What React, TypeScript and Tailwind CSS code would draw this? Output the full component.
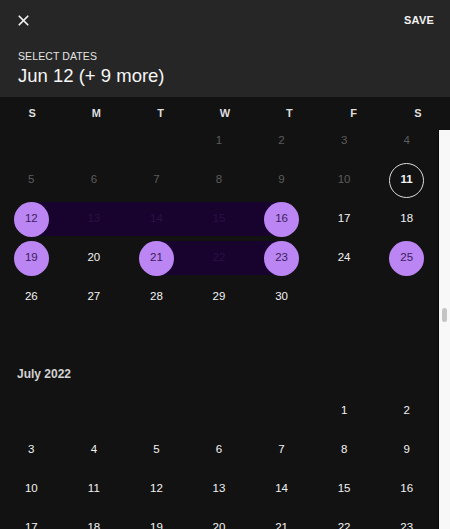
import { X } from "lucide-react";

type Month = {
  label: string;
  offset: number;
  days: number;
  pastUntil: number;
  today?: number;
  selected: number[];
};

const WEEKDAYS = ["S", "M", "T", "W", "T", "F", "S"];

const MONTHS: Month[] = [
  { label: "June 2022", offset: 3, days: 30, pastUntil: 10, today: 11, selected: [12, 13, 14, 15, 16, 19, 21, 22, 23, 25] },
  { label: "July 2022", offset: 5, days: 31, pastUntil: 0, selected: [] },
];

function DayCell({ day, month }: { day: number; month: Month }) {
  const col = (month.offset + day - 1) % 7;
  const isSel = (d: number) => month.selected.includes(d);
  const selected = isSel(day);
  const prev = selected && col > 0 && isSel(day - 1);
  const next = selected && col < 6 && isSel(day + 1);

  let band = "";
  if (prev && next) band = "bg-[#17032e]";
  else if (next) band = "bg-[linear-gradient(to_right,transparent_50%,#17032e_50%)]";
  else if (prev) band = "bg-[linear-gradient(to_left,transparent_50%,#17032e_50%)]";

  const middle = prev && next;
  const past = day <= month.pastUntil;
  const today = day === month.today;

  let inner = "text-[#f2f2f2]";
  if (past) inner = "text-[#5c5c5c]";
  if (today) inner = "border border-[#dcdcdc] font-bold text-[#f2f2f2]";
  if (selected && !middle) inner = "bg-[#bb85f3] text-[#3a1d5c]";
  if (middle) inner = "text-[#2c1045]";

  return (
    <div className="flex h-[39px] items-center justify-center">
      <div className={`flex h-[34px] w-full items-center justify-center ${band}`}>
        <div className={`flex size-[35px] items-center justify-center rounded-full ${inner}`}>{day}</div>
      </div>
    </div>
  );
}

function MonthGrid({ month, showLabel }: { month: Month; showLabel: boolean }) {
  return (
    <div>
      {showLabel ? (
        <div className="pb-[10px] pl-[17px] pt-[49px] text-[12px] font-bold leading-[16px] text-[#d2d2d2]">{month.label}</div>
      ) : null}
      <div className="grid grid-cols-7 text-[11.5px]">
        {Array.from({ length: month.offset }, (_, i) => (
          <div key={`e${i}`} className="h-[39px]" />
        ))}
        {Array.from({ length: month.days }, (_, i) => (
          <DayCell key={i} day={i + 1} month={month} />
        ))}
      </div>
    </div>
  );
}

export default function App() {
  return (
    <div className="flex h-[529px] w-[450px] flex-col overflow-hidden bg-[#121212] font-['Liberation_Sans',Arial,sans-serif]">
      <header className="flex h-[97px] shrink-0 flex-col bg-[#262626] px-[18px]">
        <div className="flex h-[40px] items-center justify-between">
          <button aria-label="Close" className="-ml-[3px] text-[#f2f2f2]" type="button">
            <X size={17} strokeWidth={2.4} />
          </button>
          <button className="-mr-[2px] text-[11px] font-bold tracking-[0.2px] text-[#f2f2f2]" type="button">SAVE</button>
        </div>
        <p className="mt-[9px] text-[10.5px] leading-[14px] tracking-[0.1px] text-[#e4e4e4]">SELECT DATES</p>
        <h1 className="mt-[1px] text-[18.5px] leading-[24px] text-[#f6f6f6]">Jun 12 (+ 9 more)</h1>
      </header>

      <div className="grid h-[33px] shrink-0 grid-cols-7 items-center text-center text-[11px] font-bold text-[#dedede]">
        {WEEKDAYS.map((d, i) => (
          <span key={i}>{d}</span>
        ))}
      </div>

      <div className="flex min-h-0 flex-1">
        <div className="min-w-0 flex-1 overflow-hidden">
          <div className="-mt-[8.5px]">
            {MONTHS.map((m, i) => (
              <MonthGrid key={m.label} month={m} showLabel={i > 0} />
            ))}
          </div>
        </div>
        <div className="w-[12px] shrink-0 border-l border-[#0a0a0a] bg-[#f8f8f8] pl-[3px] pt-[178px]">
          <div className="h-[14px] w-[5px] rounded-full bg-[#c4c4c4]" />
        </div>
      </div>
    </div>
  );
}
